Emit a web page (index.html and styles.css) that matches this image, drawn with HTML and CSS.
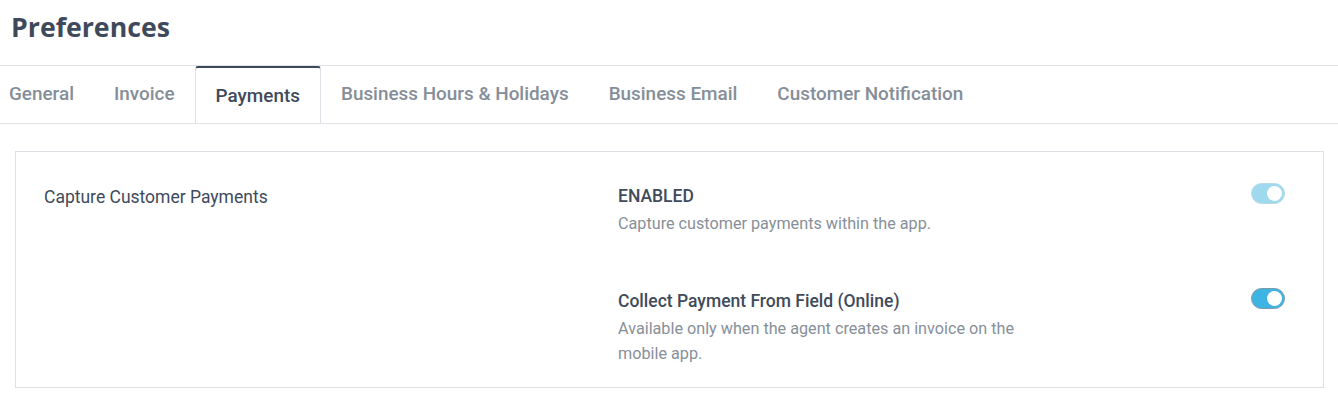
FILE: index.html
```html
<!DOCTYPE html>
<html>
<head>
<meta charset="utf-8">
<link rel="stylesheet" href="styles.css">
</head>
<body>
<header class="page-header">
  <h1 class="title">Preferences</h1>
</header>
<nav class="tabs">
  <a class="tab">General</a>
  <a class="tab">Invoice</a>
  <a class="tab active">Payments</a>
  <a class="tab">Business Hours &amp; Holidays</a>
  <a class="tab">Business Email</a>
  <a class="tab">Customer Notification</a>
</nav>
<main class="content">
  <section class="card">
    <div class="label">Capture Customer Payments</div>
    <div class="options">
      <div class="option">
        <div class="option-text">
          <div class="option-title">ENABLED</div>
          <div class="option-desc">Capture customer payments within the app.</div>
        </div>
        <span class="toggle toggle-light"><span class="knob"></span></span>
      </div>
      <div class="option">
        <div class="option-text">
          <div class="option-title">Collect Payment From Field (Online)</div>
          <div class="option-desc">Available only when the agent creates an invoice on the mobile app.</div>
        </div>
        <span class="toggle toggle-on"><span class="knob"></span></span>
      </div>
    </div>
  </section>
</main>
</body>
</html>
```

FILE: styles.css
```css
* { box-sizing: border-box; }
html, body { margin: 0; padding: 0; background: #fff; }
body { font-family: Roboto, "Liberation Sans", sans-serif; color: #3e4a5b; }

.page-header {
  height: 66px;
  padding-left: 11px;
  border-bottom: 1px solid #dfe2e6;
}
.title {
  margin: 0;
  padding-top: 9px;
  font-family: "Open Sans", "Liberation Sans", sans-serif;
  font-weight: 700;
  font-size: 26.7px;
  line-height: 36px;
  color: #3e4a5b;
}

.tabs {
  display: flex;
  height: 58px;
  border-bottom: 1px solid #dfe2e6;
}
.tab {
  display: flex;
  align-items: center;
  padding: 0 20px 2px 20px;
  font-size: 18.9px;
  font-weight: 500;
  color: #858e98;
}
.tab:first-child { padding-left: 9px; }
.tab.active {
  color: #3e4a5b;
  border: 1px solid #dcdfe3;
  border-top: 2px solid #3e4a5b;
  border-bottom: none;
  border-radius: 3px 3px 0 0;
  padding-top: 2px;
}

.content { padding: 27px 15px 0 15px; }
.card {
  border: 1px solid #dcdfe3;
  display: flex;
  padding: 32px 38px 21px 28px;
  width: 1309px;
}
.label {
  width: 574px;
  margin-top: 1px;
  font-size: 17.5px;
  line-height: 24px;
  color: #3e4a5b;
}
.options { flex: 1; display: flex; flex-direction: column; gap: 53px; }
.option { display: flex; justify-content: space-between; align-items: flex-start; }
.option-text { width: 430px; }
.option-title {
  font-size: 17.5px;
  font-weight: 500;
  line-height: 24px;
  color: #404b5a;
  margin-bottom: 3px;
}
.option-desc {
  font-size: 16.2px;
  line-height: 25px;
  color: #878f99;
}

.toggle {
  display: flex;
  justify-content: flex-end;
  align-items: center;
  width: 34px;
  height: 21px;
  border-radius: 11px;
  padding: 2px;
  margin-top: -1px;
  border: 1px solid rgba(0,0,0,0.12);
}
.toggle-light { background: #9fd9ef; border-color: #b9d9e6; }
.toggle-on { background: #3db4e3; border-color: #7f9aa6; }
.knob {
  width: 15px;
  height: 15px;
  border-radius: 50%;
  background: #fff;
}
```
